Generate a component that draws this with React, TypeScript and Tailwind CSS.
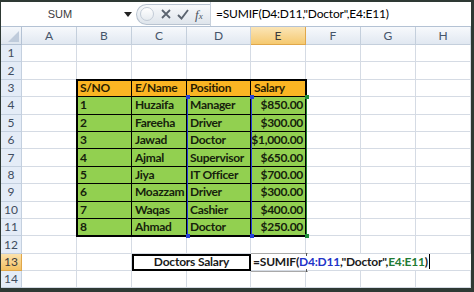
import React from 'react';

const COLS = ['A', 'B', 'C', 'D', 'E', 'F', 'G', 'H'];

const data = [
  ['1', 'Huzaifa', 'Manager', '$850.00'],
  ['2', 'Fareeha', 'Driver', '$300.00'],
  ['3', 'Jawad', 'Doctor', '$1,000.00'],
  ['4', 'Ajmal', 'Supervisor', '$650.00'],
  ['5', 'Jiya', 'IT Officer', '$700.00'],
  ['6', 'Moazzam', 'Driver', '$300.00'],
  ['7', 'Waqas', 'Cashier', '$400.00'],
  ['8', 'Ahmad', 'Doctor', '$250.00'],
];

const gridCell = 'border-r border-b border-[#d5dbe4] bg-white';

const RowHeader = ({ n, active }: { n: number; active?: boolean }) => (
  <div
    className={
      active
        ? 'flex items-center justify-center border-r border-b border-[#e0a74a] bg-linear-to-b from-[#fbe2ad] to-[#f3c160] text-[12px] text-[#3b3b3b]'
        : 'flex items-center justify-center border-r border-b border-[#c4d0df] bg-[#e4ecf7] text-[12px] text-[#3f4d60]'
    }
  >
    {n}
  </div>
);

const FormulaBar = () => (
  <div className="flex h-[25px] items-center border-b border-[#b4c2d4] bg-white">
    {/* name box */}
    <div className="flex h-full w-[135px] items-center">
      <div className="w-[118px] text-center text-[11px] text-[#3c3c3c] font-['Liberation_Sans',sans-serif]">SUM</div>
      <svg width="8" height="5" viewBox="0 0 8 5" className="ml-[5px]">
        <polygon points="0,0 8,0 4,5" fill="#222" />
      </svg>
    </div>
    {/* buttons */}
    <div className="flex h-[21px] w-[74px] items-center rounded-l-full border border-r-0 border-[#b8c3d0] bg-linear-to-b from-[#f7f9fb] to-[#dfe5ec]">
      <div className="ml-[3px] h-[14px] w-[14px] rounded-full border border-[#c3ccd7] bg-linear-to-b from-white to-[#e6ebf0]" />
      <svg width="10" height="10" viewBox="0 0 10 10" className="ml-[7px]">
        <path d="M1 1 L9 9 M9 1 L1 9" stroke="#5b6470" strokeWidth="1.8" />
      </svg>
      <svg width="12" height="11" viewBox="0 0 12 11" className="ml-[6px]">
        <path d="M1 6 L4.5 9.5 L11 1" stroke="#5b6470" strokeWidth="1.9" fill="none" />
      </svg>
      <span className="ml-[6px] text-[13px] italic leading-none text-[#4b5360] font-['Liberation_Serif',serif]">
        f<span className="text-[9px]">x</span>
      </span>
    </div>
    <div className="h-full border-l border-[#c8d1dc]" />
    <div className="pl-[5px] text-[12px] tracking-[-0.2px] text-black">=SUMIF(D4:D11,"Doctor",E4:E11)</div>
  </div>
);

const Table = () => (
  <div className="relative z-10 col-[3/7] row-[4/13] grid grid-cols-[55px_55px_64px_55px] grid-rows-[repeat(9,17.4px)] outline-2 -outline-offset-1 outline-black">
    {['S/NO', 'E/Name', 'Position', 'Salary'].map((h) => (
      <div key={h} className="flex items-center border-r border-b border-black bg-[#fbb523] px-[3px] text-[12px] font-bold tracking-[-0.3px] text-[#2a1d00]">
        {h}
      </div>
    ))}
    {data.map((r) =>
      r.map((v, i) => (
        <div
          key={r[0] + i}
          className={
            'flex items-center overflow-hidden border-r border-b border-black bg-[#92d050] px-[3px] text-[12px] font-bold tracking-[-0.3px] text-[#16220c] whitespace-nowrap ' +
            (i === 3 ? 'justify-end pr-[2px]' : '')
          }
        >
          {v}
        </div>
      ))
    )}
  </div>
);

const Sheet = () => {
  const cells: React.ReactNode[] = [];
  for (let r = 1; r <= 14; r++) {
    cells.push(<RowHeader key={'h' + r} n={r} active={r === 13} />);
    if (r === 13) {
      cells.push(<div key="13a" className={gridCell} />);
      cells.push(<div key="13b" className={gridCell} />);
      cells.push(
        <div key="13cd" className="relative z-10 col-span-2 flex items-center justify-center border-2 border-black bg-white text-[12px] font-bold tracking-[-0.2px] text-[#1a1a1a]">
          Doctors Salary
        </div>
      );
      cells.push(
        <div key="13e" className="col-span-4 flex items-center border-b border-[#d5dbe4] bg-white pl-[2px] text-[12px] font-bold tracking-[-0.2px] whitespace-nowrap text-[#1a1a1a]">
          =SUMIF(<span className="text-[#2233c8]">D4:D11</span>,"Doctor",<span className="text-[#1f7a33]">E4:E11</span>)
          <span className="ml-px inline-block h-[15px] w-px bg-black" />
        </div>
      );
      continue;
    }
    COLS.forEach((c, i) => {
      if (r >= 3 && r <= 11 && i >= 1 && i <= 4) return;
      cells.push(<div key={c + r} className={gridCell} />);
    });
  }

  return (
    <div className="relative grid grid-cols-[21px_55px_55px_55px_64px_55px_55px_55px_55px] grid-rows-[18px_repeat(14,17.4px)]">
      {/* corner */}
      <div className="relative border-r border-b border-[#b4c2d4] bg-linear-to-b from-[#f4f7fb] to-[#dfe6ef]">
        <svg width="21" height="18" viewBox="0 0 21 18" className="absolute left-0 top-0">
          <polygon points="7,15 18,4 18,15" fill="#bfcbdb" />
        </svg>
      </div>
      {COLS.map((c) => (
        <div
          key={c}
          className={
            c === 'E'
              ? 'flex items-center justify-center border-r border-b border-[#e0a74a] bg-linear-to-b from-[#fbe5b6] to-[#f5c96f] text-[12px] text-[#3b3b3b]'
              : 'flex items-center justify-center border-r border-b border-[#c4cfdc] bg-linear-to-b from-[#f7f9fc] to-[#e1e8f1] text-[12px] text-[#45556a]'
          }
        >
          {c}
        </div>
      ))}
      <Table />
      {cells}

      {/* range highlights for D4:D11 and E4:E11 */}
      <div className="absolute left-[186px] top-[70px] z-20 h-[140px] w-[65px] border-x border-[#2540d8]" />
      <div className="absolute left-[250px] top-[70px] z-20 h-[140px] w-[56px] border-r border-[#1d7f34]" />
      <div className="absolute left-[185px] top-[68px] z-30 h-[4px] w-[4px] bg-[#2540d8]" />
      <div className="absolute left-[249px] top-[68px] z-30 h-[4px] w-[4px] bg-[#2540d8]" />
      <div className="absolute left-[185px] top-[207px] z-30 h-[4px] w-[4px] bg-[#2540d8]" />
      <div className="absolute left-[249px] top-[207px] z-30 h-[4px] w-[4px] bg-[#2540d8]" />
      <div className="absolute left-[304px] top-[68px] z-30 h-[4px] w-[4px] bg-[#1d8f3a]" />
      <div className="absolute left-[304px] top-[207px] z-30 h-[4px] w-[4px] bg-[#1d8f3a]" />

      {/* edited cell frame */}
      <div className="absolute left-[250px] top-[226px] z-20 h-[19px] w-[57px] border-y border-[#a9a9a9]" />
      <div className="absolute left-[305px] top-[226px] z-20 h-[3px] w-px bg-[#555]" />
      <div className="absolute left-[305px] top-[242px] z-20 h-[3px] w-px bg-[#555]" />
    </div>
  );
};

export default function App() {
  return (
    <div className="h-[292px] w-[474px] overflow-hidden bg-[#2e3934] pl-px pr-[3px] pt-[2px] font-['Lato','Liberation_Sans',sans-serif]">
      <div className="w-[470px] bg-white">
        <FormulaBar />
        <Sheet />
      </div>
    </div>
  );
}
